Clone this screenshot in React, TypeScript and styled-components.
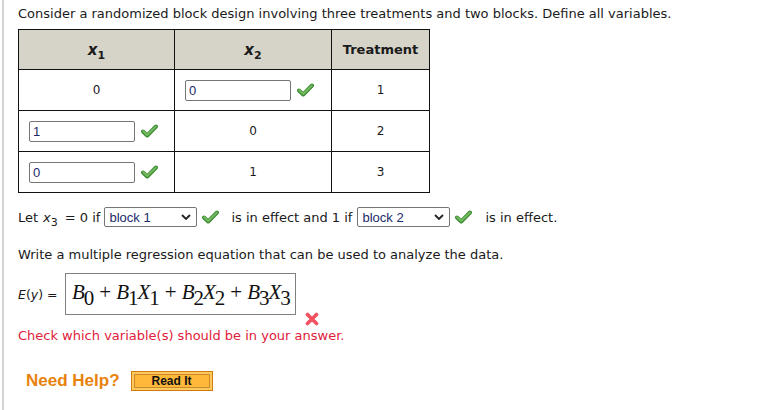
import React from 'react';
import styled, { createGlobalStyle } from 'styled-components';

const GlobalStyle = createGlobalStyle`
  html, body {
    margin: 0;
    padding: 0;
    background: #ffffff;
  }
`;

const Page = styled.div`
  min-height: 410px;
  box-sizing: border-box;
  margin-left: 2px;
  border-left: 2px solid #d4d4d4;
  padding: 6px 0 0 14px;
  font-family: 'DejaVu Sans', Verdana, sans-serif;
  font-size: 13px;
  color: #1a1a1a;
`;

const Prompt = styled.div`
  line-height: 16px;
  height: 16px;
  margin-bottom: 7px;
`;

const Table = styled.table`
  border-collapse: collapse;
  width: 412px;
  table-layout: fixed;
`;

const HeadCell = styled.th<{ $w: number }>`
  width: ${(p) => p.$w}px;
  height: 39px;
  background: #d6d3c9;
  border: 1px solid #111;
  font-weight: bold;
  font-size: 13px;
  text-align: center;
  padding: 0;
`;

const Cell = styled.td`
  height: 40px;
  border: 1px solid #111;
  text-align: center;
  padding: 0;
  font-size: 12px;
`;

const AnswerCell = styled(Cell)`
  text-align: left;
  padding-left: 10px;
`;

const Var = styled.span`
  font-style: italic;
  font-weight: bold;
  font-size: 15px;
`;

const Sub = styled.sub`
  font-size: 11px;
  vertical-align: -4px;
  line-height: 0;
`;

const InputRow = styled.div`
  display: flex;
  align-items: center;
  gap: 6px;
`;

const TextBox = styled.div`
  box-sizing: border-box;
  width: 106px;
  height: 21px;
  border: 1px solid #767676;
  border-radius: 2px;
  font-family: 'Liberation Sans', Arial, sans-serif;
  font-size: 13px;
  line-height: 19px;
  padding-left: 3px;
  color: #1a2a6a;
  text-align: left;
`;

const Line = styled.div`
  display: flex;
  align-items: center;
  margin-top: 14px;
  height: 20px;
  white-space: pre;
`;

const InlineVar = styled.span`
  margin-left: 5px;
  i {
    font-style: italic;
  }
`;

const Filler = styled.span<{ $l: number; $r: number }>`
  margin-left: ${(p) => p.$l}px;
  margin-right: ${(p) => p.$r}px;
`;

const Select = styled.div`
  box-sizing: border-box;
  width: 93px;
  height: 20px;
  border: 1px solid #767676;
  border-radius: 2px;
  display: flex;
  align-items: center;
  justify-content: space-between;
  padding: 0 5px 0 4px;
  font-family: 'Liberation Sans', Arial, sans-serif;
  font-size: 13px;
  color: #1a2a6a;
  margin-right: 5px;
`;

const Para = styled.div`
  margin-top: 20px;
  line-height: 16px;
`;

const EqRow = styled.div`
  display: flex;
  align-items: center;
  margin-top: 10px;
`;

const EqLabel = styled.span`
  font-size: 12.5px;
  width: 47px;
  i {
    font-style: italic;
  }
`;

const MathBox = styled.div`
  box-sizing: border-box;
  width: 231px;
  height: 42px;
  border: 1px solid #808080;
  display: flex;
  align-items: center;
  padding: 0 0 4px 6px;
  font-family: 'Liberation Serif', 'Times New Roman', serif;
  font-size: 21px;
  color: #111;
`;

const MI = styled.span`
  font-style: italic;
`;

const MSub = styled.span`
  font-size: 21px;
  position: relative;
  top: 6px;
  margin-left: -1px;
  margin-right: -1px;
`;

const Plus = styled.span`
  margin: 0 5px 0 6px;
`;

const XMark = styled.div`
  margin-left: 287px;
  margin-top: -3px;
  height: 14px;
`;

const ErrorText = styled.div`
  color: #e0203a;
  margin-top: 2px;
  line-height: 16px;
`;

const HelpRow = styled.div`
  display: flex;
  align-items: center;
  margin-top: 27px;
  padding-left: 8px;
  gap: 11px;
`;

const NeedHelp = styled.span`
  font-family: 'Liberation Sans', Arial, sans-serif;
  font-weight: bold;
  font-size: 17px;
  color: #e8820c;
`;

const ReadIt = styled.button`
  box-sizing: border-box;
  width: 82px;
  height: 20px;
  border: 1px solid #d07a10;
  background: #ffb83a;
  box-shadow: inset 0 0 0 2px #ffc95e, inset 0 0 0 3px #c98a2a;
  font-family: 'Liberation Sans', Arial, sans-serif;
  font-weight: bold;
  font-size: 12px;
  color: #111;
  padding: 0;
`;

const Check = () => (
  <svg width="17" height="14" viewBox="0 0 17 14">
    <path d="M2 7.5 L6.2 11.5 L15 2.5" fill="none" stroke="#3f8a34" strokeWidth="4" strokeLinecap="round" strokeLinejoin="round" />
    <path d="M2.2 7.3 L6.2 11 L14.8 2.6" fill="none" stroke="#72bb5f" strokeWidth="2" strokeLinecap="round" strokeLinejoin="round" />
  </svg>
);

const Cross = () => (
  <svg width="14" height="14" viewBox="0 0 14 14">
    <path d="M2.5 2.5 L11.5 11.5 M11.5 2.5 L2.5 11.5" stroke="#f2525f" strokeWidth="3.6" strokeLinecap="round" />
  </svg>
);

const Chevron = () => (
  <svg width="10" height="6" viewBox="0 0 10 6">
    <path d="M1 1 L5 5 L9 1" fill="none" stroke="#222" strokeWidth="1.8" />
  </svg>
);

const Answer = ({ value }: { value: string }) => (
  <InputRow>
    <TextBox>{value}</TextBox>
    <Check />
  </InputRow>
);

const App = () => (
  <>
    <GlobalStyle />
    <Page>
      <Prompt>Consider a randomized block design involving three treatments and two blocks. Define all variables.</Prompt>
      <Table>
        <thead>
          <tr>
            <HeadCell $w={155}><Var>x</Var><Sub><b>1</b></Sub></HeadCell>
            <HeadCell $w={156}><Var>x</Var><Sub><b>2</b></Sub></HeadCell>
            <HeadCell $w={97}>Treatment</HeadCell>
          </tr>
        </thead>
        <tbody>
          <tr>
            <Cell>0</Cell>
            <AnswerCell><Answer value="0" /></AnswerCell>
            <Cell>1</Cell>
          </tr>
          <tr>
            <AnswerCell><Answer value="1" /></AnswerCell>
            <Cell>0</Cell>
            <Cell>2</Cell>
          </tr>
          <tr>
            <AnswerCell><Answer value="0" /></AnswerCell>
            <Cell>1</Cell>
            <Cell>3</Cell>
          </tr>
        </tbody>
      </Table>
      <Line>
        <span>Let</span>
        <InlineVar><i>x</i><Sub>3</Sub></InlineVar>
        <Filler $l={7} $r={4}>= 0 if</Filler>
        <Select>block 1<Chevron /></Select>
        <Check />
        <Filler $l={12} $r={5}>is in effect and 1 if</Filler>
        <Select>block 2<Chevron /></Select>
        <Check />
        <Filler $l={13} $r={0}>is in effect.</Filler>
      </Line>
      <Para>Write a multiple regression equation that can be used to analyze the data.</Para>
      <EqRow>
        <EqLabel><i>E</i>(<i>y</i>) =</EqLabel>
        <MathBox>
          <MI>B</MI><MSub>0</MSub>
          <Plus>+</Plus>
          <MI>B</MI><MSub>1</MSub><MI>X</MI><MSub>1</MSub>
          <Plus>+</Plus>
          <MI>B</MI><MSub>2</MSub><MI>X</MI><MSub>2</MSub>
          <Plus>+</Plus>
          <MI>B</MI><MSub>3</MSub><MI>X</MI><MSub>3</MSub>
        </MathBox>
      </EqRow>
      <XMark><Cross /></XMark>
      <ErrorText>Check which variable(s) should be in your answer.</ErrorText>
      <HelpRow>
        <NeedHelp>Need Help?</NeedHelp>
        <ReadIt>Read It</ReadIt>
      </HelpRow>
    </Page>
  </>
);

export default App;
